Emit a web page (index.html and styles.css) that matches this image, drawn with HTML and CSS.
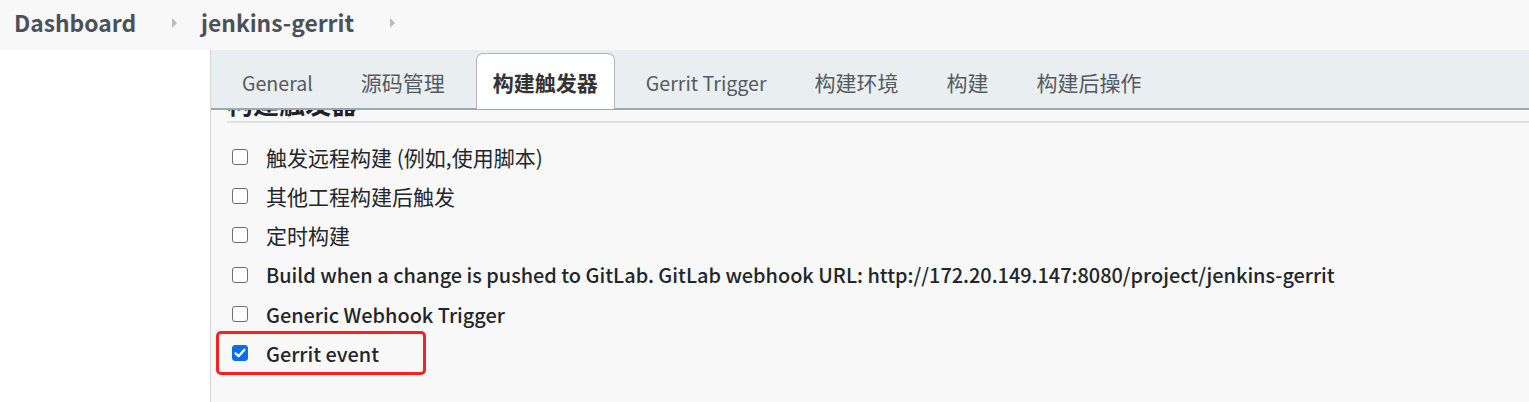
FILE: index.html
```html
<!DOCTYPE html>
<html lang="zh">
<head>
<meta charset="utf-8">
<title>jenkins-gerrit Config</title>
<link rel="stylesheet" href="styles.css">
</head>
<body>
<header class="breadcrumbs">
  <a class="crumb" href="#">Dashboard</a>
  <span class="sep"></span>
  <a class="crumb" href="#">jenkins-gerrit</a>
  <span class="sep"></span>
</header>
<div class="main">
  <aside class="sidebar"></aside>
  <section class="content">
    <nav class="tabs">
      <span class="tab latin">General</span>
      <span class="tab">源码管理</span>
      <span class="tab active">构建触发器</span>
      <span class="tab latin">Gerrit Trigger</span>
      <span class="tab">构建环境</span>
      <span class="tab">构建</span>
      <span class="tab">构建后操作</span>
    </nav>
    <div class="section-head"><h2 class="section-title">构建触发器</h2></div>
    <div class="options">
      <label class="row"><span class="box"></span><span class="text">触发远程构建 (例如,使用脚本)</span></label>
      <label class="row"><span class="box"></span><span class="text">其他工程构建后触发</span></label>
      <label class="row"><span class="box"></span><span class="text">定时构建</span></label>
      <label class="row latin"><span class="box"></span><span class="text">Build when a change is pushed to GitLab. GitLab webhook URL: http://172.20.149.147:8080/project/jenkins-gerrit</span></label>
      <label class="row latin"><span class="box"></span><span class="text">Generic Webhook Trigger</span></label>
      <label class="row latin highlight"><span class="box checked"><svg viewBox="0 0 16 16" width="16" height="16"><path d="M3.6 8.4 L6.6 11.2 L12.4 4.8" fill="none" stroke="#fff" stroke-width="2.3" stroke-linecap="round" stroke-linejoin="round"/></svg></span><span class="text">Gerrit event</span></label>
    </div>
  </section>
</div>
</body>
</html>
```
FILE: styles.css
```css
html, body {
  margin: 0;
  padding: 0;
}
body {
  font-family: "Noto Sans CJK SC", "Noto Sans", sans-serif;
  background: #f8f8f8;
  color: #1f2328;
  width: 1529px;
  height: 402px;
  overflow: hidden;
}
.breadcrumbs {
  height: 50px;
  display: flex;
  align-items: center;
  padding: 0 0 5px 14px;
  background: #f8f8f8;
  box-sizing: border-box;
}
.crumb {
  font-size: 22.8px;
  font-weight: 700;
  color: #4b515b;
  text-decoration: none;
}
.sep {
  width: 0;
  height: 0;
  border-top: 5px solid transparent;
  border-bottom: 5px solid transparent;
  border-left: 5px solid #b8bcc2;
  margin: 0 24px 0 36px;
}
.main {
  display: flex;
  height: 352px;
}
.sidebar {
  width: 210px;
  background: #ffffff;
  border-right: 1px solid #d5d5d5;
  flex: none;
}
.content {
  flex: 1;
  background: #f8f8f8;
  overflow: hidden;
}
.tabs {
  height: 60px;
  background: #e9eef1;
  border-bottom: 2px solid #9ba6b1;
  box-sizing: border-box;
  display: flex;
  align-items: flex-end;
  gap: 14px;
  padding-left: 14px;
}
.tab {
  height: 55px;
  padding: 0 16px;
  display: flex;
  align-items: center;
  font-size: 21px;
  color: #555a60;
  box-sizing: border-box;
  border: 1px solid transparent;
  border-bottom: none;
  margin-bottom: -1px;
}
.tab.latin {
  font-size: 19.6px;
}
.tab.active {
  background: #ffffff;
  border-color: #aeb7c0;
  border-radius: 7px 7px 0 0;
  font-weight: 700;
  color: #333;
  height: 56px;
}
.section-head {
  height: 11px;
  overflow: hidden;
  margin: 0 0 0 16px;
  border-bottom: 2px solid #e2e2e2;
}
.section-title {
  margin: -22px 0 0 0;
  font-size: 26px;
  font-weight: 700;
  line-height: 30px;
  color: #1f2328;
}
.options {
  padding: 14px 0 0 21px;
  display: flex;
  flex-direction: column;
}
.row {
  display: flex;
  align-items: center;
  height: 39.4px;
  font-size: 21px;
  font-weight: 400;
  color: #22262b;
}
.row.latin {
  font-size: 19.9px;
  font-weight: 500;
}
.box {
  width: 16px;
  height: 16px;
  box-sizing: border-box;
  border: 1.5px solid #6e6e6e;
  border-radius: 3px;
  background: #fff;
  flex: none;
  margin-right: 18px;
  display: flex;
}
.box.checked {
  background: #0b6ee6;
  border-color: #0b6ee6;
}
.box svg {
  margin: -1.5px;
}
.text {
  white-space: nowrap;
}
.row.highlight {
  width: 210px;
  height: 44px;
  box-sizing: border-box;
  border: 3px solid #ff1f1f;
  border-radius: 5px;
  margin: -2.5px 0 0 -16px;
  padding-left: 13px;
}
```
